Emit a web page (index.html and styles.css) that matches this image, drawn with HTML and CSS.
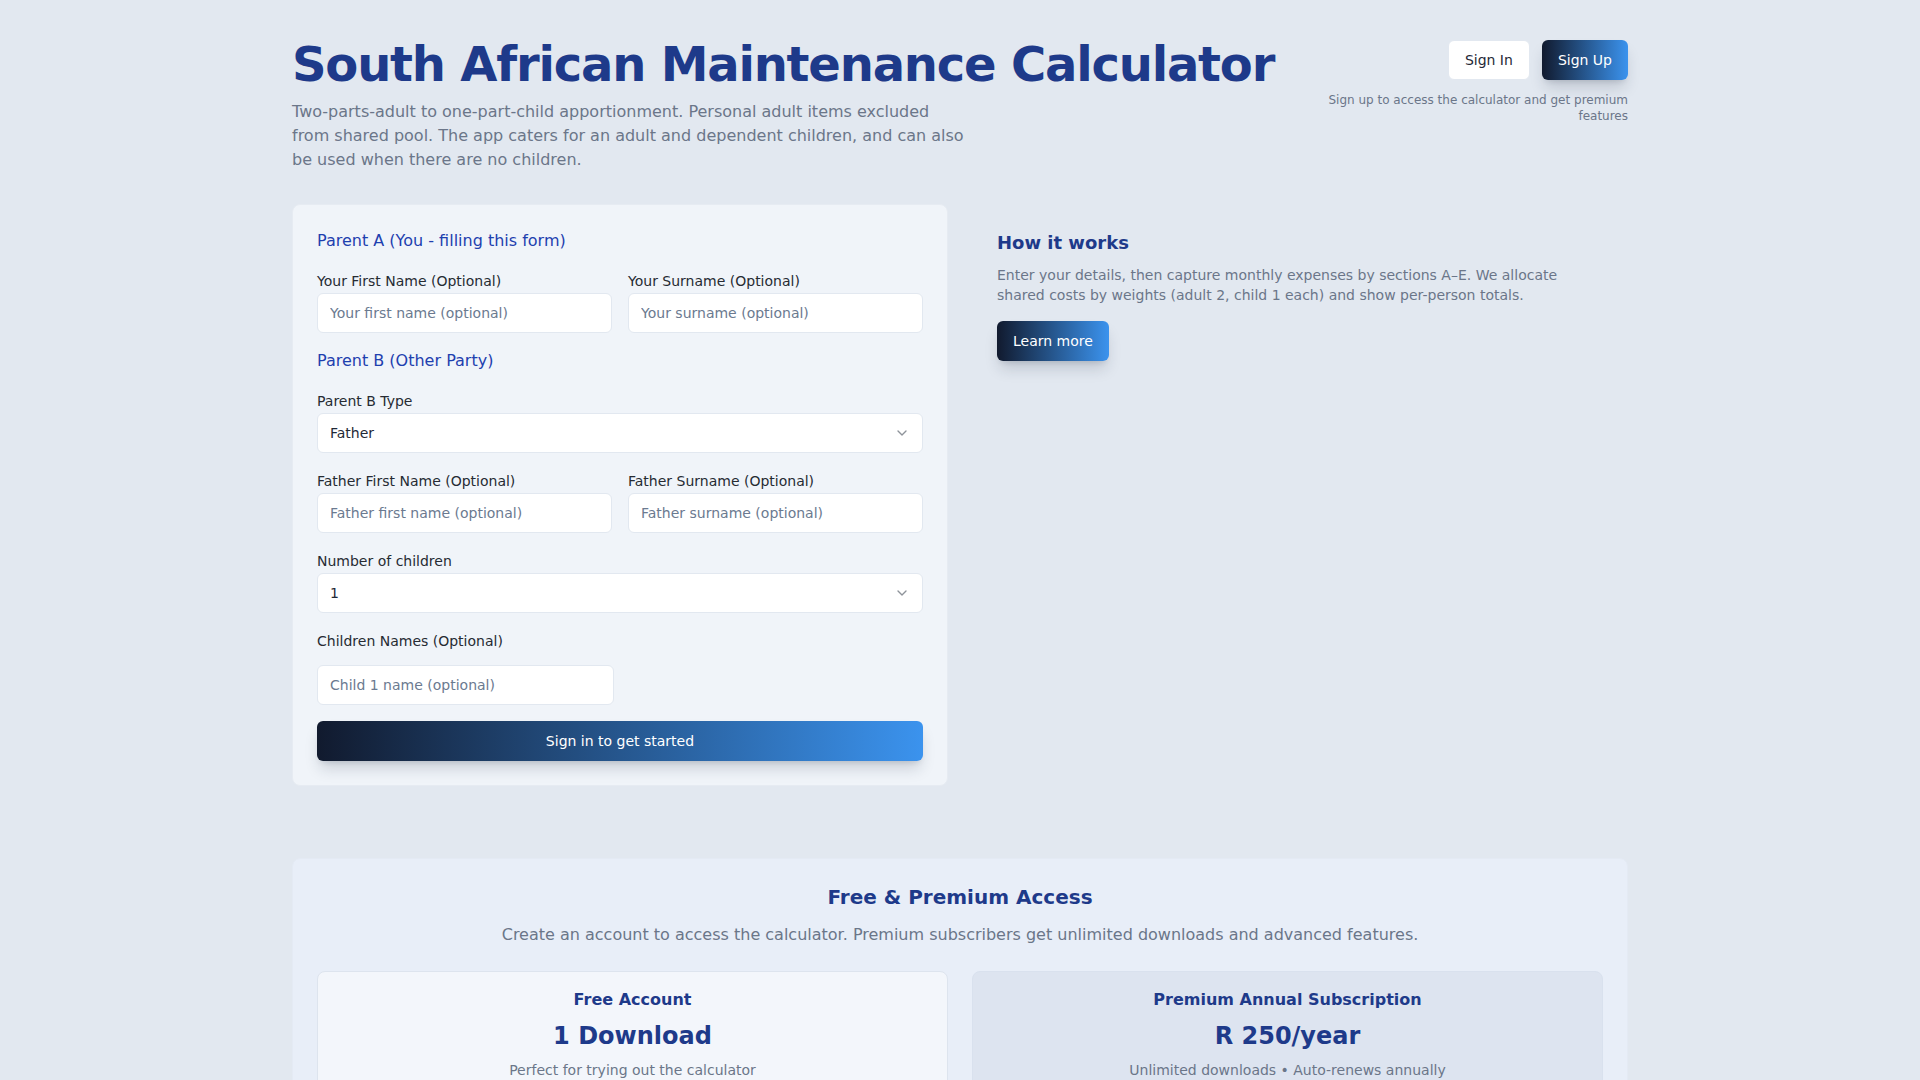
FILE: index.html
```html
<!DOCTYPE html>
<html lang="en">
<head>
<meta charset="utf-8">
<title>South African Maintenance Calculator</title>
<link rel="stylesheet" href="styles.css">
</head>
<body>
<div class="page">
  <header class="header">
    <div class="intro">
      <h1 class="title">South African Maintenance Calculator</h1>
      <p class="lead">Two-parts-adult to one-part-child apportionment. Personal adult items excluded from shared pool. The app caters for an adult and dependent children, and can also be used when there are no children.</p>
    </div>
    <div class="auth">
      <div class="auth-buttons">
        <button class="btn btn-light">Sign In</button>
        <button class="btn btn-gradient">Sign Up</button>
      </div>
      <p class="auth-note">Sign up to access the calculator and get premium features</p>
    </div>
  </header>

  <main class="main">
    <section class="card">
      <h2 class="form-heading">Parent A (You - filling this form)</h2>
      <div class="row">
        <div class="field">
          <label class="label">Your First Name (Optional)</label>
          <input class="input" type="text" placeholder="Your first name (optional)">
        </div>
        <div class="field">
          <label class="label">Your Surname (Optional)</label>
          <input class="input" type="text" placeholder="Your surname (optional)">
        </div>
      </div>

      <h2 class="form-heading">Parent B (Other Party)</h2>
      <div class="field">
        <label class="label">Parent B Type</label>
        <button class="select" type="button">
          <span>Father</span>
          <svg class="chevron" width="16" height="16" viewBox="0 0 24 24" fill="none" stroke="currentColor" stroke-width="2" stroke-linecap="round" stroke-linejoin="round"><path d="m6 9 6 6 6-6"/></svg>
        </button>
      </div>
      <div class="row">
        <div class="field">
          <label class="label">Father First Name (Optional)</label>
          <input class="input" type="text" placeholder="Father first name (optional)">
        </div>
        <div class="field">
          <label class="label">Father Surname (Optional)</label>
          <input class="input" type="text" placeholder="Father surname (optional)">
        </div>
      </div>
      <div class="field">
        <label class="label">Number of children</label>
        <button class="select" type="button">
          <span>1</span>
          <svg class="chevron" width="16" height="16" viewBox="0 0 24 24" fill="none" stroke="currentColor" stroke-width="2" stroke-linecap="round" stroke-linejoin="round"><path d="m6 9 6 6 6-6"/></svg>
        </button>
      </div>
      <div class="field">
        <label class="label label-spaced">Children Names (Optional)</label>
        <div class="child-grid">
          <input class="input" type="text" placeholder="Child 1 name (optional)">
        </div>
      </div>
      <button class="btn btn-gradient btn-block" type="button">Sign in to get started</button>
    </section>

    <aside class="info">
      <h3 class="info-title">How it works</h3>
      <p class="info-text">Enter your details, then capture monthly expenses by sections A–E. We allocate shared costs by weights (adult 2, child 1 each) and show per-person totals.</p>
      <button class="btn btn-gradient" type="button">Learn more</button>
    </aside>
  </main>

  <section class="access">
    <h2 class="access-title">Free &amp; Premium Access</h2>
    <p class="access-text">Create an account to access the calculator. Premium subscribers get unlimited downloads and advanced features.</p>
    <div class="plans">
      <div class="plan plan-free">
        <div class="plan-name">Free Account</div>
        <div class="plan-price">1 Download</div>
        <div class="plan-desc">Perfect for trying out the calculator</div>
      </div>
      <div class="plan plan-premium">
        <div class="plan-name">Premium Annual Subscription</div>
        <div class="plan-price">R 250/year</div>
        <div class="plan-desc">Unlimited downloads • Auto-renews annually</div>
      </div>
    </div>
  </section>
</div>
</body>
</html>
```

FILE: styles.css
```css
* {
  box-sizing: border-box;
}

body {
  margin: 0;
  background: #e2e8f0;
  font-family: "DejaVu Sans", sans-serif;
  color: #1f2937;
}

.page {
  max-width: 1400px;
  margin: 0 auto;
  padding: 40px 32px 40px;
}

/* Header */
.header {
  display: flex;
  justify-content: space-between;
  align-items: flex-start;
  margin-bottom: 32px;
}

.title {
  margin: 0;
  font-size: 48px;
  line-height: 48px;
  font-weight: 700;
  letter-spacing: -0.025em;
  color: #1e3a8a;
}

.lead {
  margin: 12px 0 0;
  max-width: 672px;
  font-size: 16px;
  line-height: 24px;
  color: #6b7689;
}

.auth {
  display: flex;
  flex-direction: column;
  align-items: flex-end;
}

.auth-buttons {
  display: flex;
  gap: 12px;
}

.auth-note {
  margin: 12px 0 0;
  max-width: 320px;
  text-align: right;
  font-size: 12px;
  line-height: 16px;
  color: #6b7689;
}

/* Buttons */
.btn {
  height: 40px;
  padding: 0 16px;
  border-radius: 6px;
  border: none;
  font-family: inherit;
  font-size: 14px;
  line-height: 20px;
  display: inline-flex;
  align-items: center;
  justify-content: center;
  cursor: pointer;
  white-space: nowrap;
}

.btn-light {
  background: #ffffff;
  border: 1px solid #e2e8f0;
  color: #1f2937;
}

.btn-gradient {
  background: linear-gradient(to right, #111a2e, #3b93ee);
  color: #ffffff;
  box-shadow: 0 10px 15px -3px rgba(30, 41, 59, 0.18), 0 4px 6px -4px rgba(30, 41, 59, 0.18);
}

.btn-block {
  width: 100%;
}

/* Main grid */
.main {
  display: grid;
  grid-template-columns: 1fr 1fr;
  gap: 24px;
  align-items: start;
}

.card {
  background: #f0f4f9;
  border: 1px solid #e6ebf2;
  border-radius: 8px;
  padding: 24px;
  display: flex;
  flex-direction: column;
  gap: 16px;
}

.form-heading {
  margin: 0;
  font-size: 16px;
  line-height: 24px;
  font-weight: 400;
  color: #1e40af;
}

.row {
  display: grid;
  grid-template-columns: 1fr 1fr;
  gap: 16px;
}

.field {
  display: flex;
  flex-direction: column;
}

.label {
  font-size: 14px;
  line-height: 20px;
  padding-top: 2px;
  margin-bottom: 2px;
  color: #262b33;
}

.label-spaced {
  margin-bottom: 14px;
}

.input {
  height: 40px;
  width: 100%;
  padding: 0 12px;
  border: 1px solid #e2e8f0;
  border-radius: 6px;
  background: #ffffff;
  font-family: inherit;
  font-size: 14px;
  color: #1f2937;
  outline: none;
}

.input::placeholder {
  color: #6b7a90;
}

.select {
  height: 40px;
  width: 100%;
  padding: 0 12px;
  border: 1px solid #e2e8f0;
  border-radius: 6px;
  background: #ffffff;
  font-family: inherit;
  font-size: 14px;
  color: #1f2937;
  display: flex;
  align-items: center;
  justify-content: space-between;
  text-align: left;
}

.chevron {
  color: #1f2937;
  opacity: 0.5;
  flex: none;
}

.child-grid {
  display: grid;
  grid-template-columns: 1fr 1fr;
  gap: 12px;
}

/* Info column */
.info {
  padding: 25px;
}

.info-title {
  margin: 0 0 8px;
  font-size: 18px;
  line-height: 28px;
  font-weight: 700;
  color: #1e3a8a;
}

.info-text {
  margin: 0 0 16px;
  font-size: 14px;
  line-height: 20px;
  color: #6b7689;
}

/* Access section */
.access {
  margin-top: 72px;
  background: #e8eef8;
  border: 1px solid #e4eaf4;
  border-radius: 8px;
  padding: 24px;
  text-align: center;
}

.access-title {
  margin: 0 0 12px;
  font-size: 20px;
  line-height: 28px;
  font-weight: 700;
  color: #1e3a8a;
}

.access-text {
  margin: 0 0 24px;
  font-size: 16px;
  line-height: 24px;
  color: #6b7689;
}

.plans {
  display: grid;
  grid-template-columns: 1fr 1fr;
  gap: 24px;
}

.plan {
  border-radius: 8px;
  padding: 16px;
  border: 1px solid transparent;
  display: flex;
  flex-direction: column;
  gap: 8px;
}

.plan-free {
  background: #f3f6fb;
  border-color: #dde4ee;
}

.plan-premium {
  background: #dde4f0;
  border-color: #d9e1ee;
}

.plan-name {
  font-size: 16px;
  line-height: 24px;
  font-weight: 700;
  color: #1e3a8a;
}

.plan-price {
  font-size: 24px;
  line-height: 32px;
  font-weight: 700;
  color: #1e3a8a;
}

.plan-desc {
  font-size: 14px;
  line-height: 20px;
  color: #6b7689;
  padding-bottom: 80px;
}
```
